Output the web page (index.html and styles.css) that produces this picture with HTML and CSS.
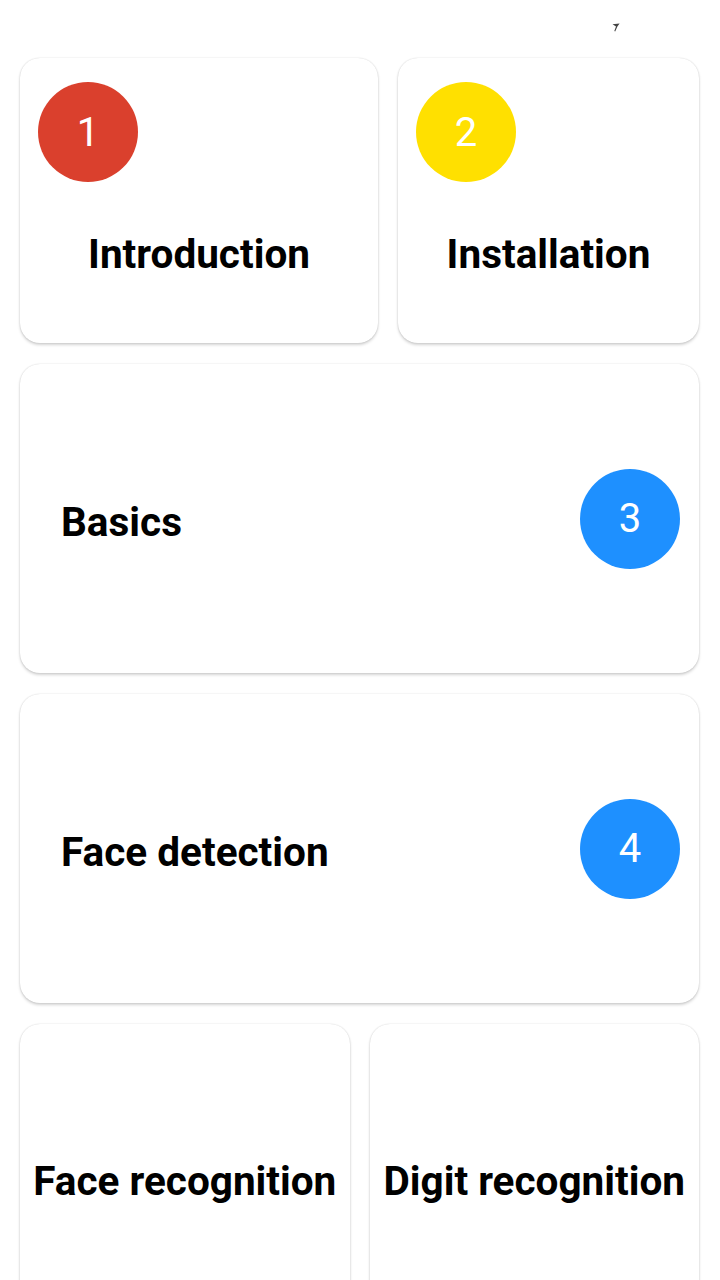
FILE: index.html
```html
<!DOCTYPE html>
<html>
<head>
<meta charset="utf-8">
<link rel="stylesheet" href="styles.css">
</head>
<body>
<div class="status">
  <svg class="glyph" width="10" height="9" viewBox="0 0 10 9"><path d="M1.5 1.2 L8.6 0.6 L6.4 3.6 L4.2 8.4 L3.3 8.0 L5.0 3.4 Z" fill="#444"/></svg>
</div>
<main class="page">
  <div class="row row-top">
    <div class="card card-top">
      <div class="badge red">1</div>
      <div class="title">Introduction</div>
    </div>
    <div class="card card-top">
      <div class="badge yellow">2</div>
      <div class="title">Installation</div>
    </div>
  </div>
  <div class="card card-wide">
    <div class="title">Basics</div>
    <div class="badge blue">3</div>
  </div>
  <div class="card card-wide">
    <div class="title">Face detection</div>
    <div class="badge blue">4</div>
  </div>
  <div class="row row-bottom">
    <div class="card card-tall">
      <div class="title">Face recognition</div>
    </div>
    <div class="card card-tall">
      <div class="title">Digit recognition</div>
    </div>
  </div>
</main>
</body>
</html>
```

FILE: styles.css
```css
html, body {
  margin: 0;
  padding: 0;
  background: #ffffff;
  overflow: hidden;
  height: 1280px;
}
body {
  font-family: Roboto, "Noto Sans", sans-serif;
  color: #000;
}
.status {
  height: 58px;
  position: relative;
}
.glyph {
  position: absolute;
  left: 611px;
  top: 23px;
}
.page {
  display: flex;
  flex-direction: column;
  gap: 21px;
  padding: 0 21px 0 20px;
}
.row {
  display: grid;
  gap: 20px;
}
.row-top {
  grid-template-columns: 358fr 301fr;
}
.row-bottom {
  grid-template-columns: 1fr 1fr;
}
.card {
  background: #fff;
  border-radius: 20px;
  box-shadow: 0 2px 3px rgba(0,0,0,0.17), 0 0 1.5px rgba(0,0,0,0.18);
  box-sizing: border-box;
}
.card-top {
  height: 285px;
  padding: 24px 18px 0;
  display: flex;
  flex-direction: column;
}
.card-top .title {
  text-align: center;
  margin-top: 48px;
}
.card-wide {
  height: 309px;
  display: flex;
  align-items: center;
  justify-content: space-between;
  padding: 0 19px 0 41px;
}
.card-wide .title {
  margin-top: 6px;
}
.card-tall {
  height: 320px;
  display: flex;
  align-items: flex-start;
  justify-content: center;
  padding-top: 133px;
}
.title {
  font-weight: 700;
  font-size: 40.5px;
  line-height: 48px;
  white-space: nowrap;
}
.badge {
  width: 100px;
  height: 100px;
  border-radius: 50%;
  color: #fff;
  font-size: 40px;
  font-weight: 400;
  display: flex;
  align-items: center;
  justify-content: center;
  flex-shrink: 0;
}
.red { background: #da402d; }
.yellow { background: #ffe000; }
.blue { background: #1e90ff; }
```
